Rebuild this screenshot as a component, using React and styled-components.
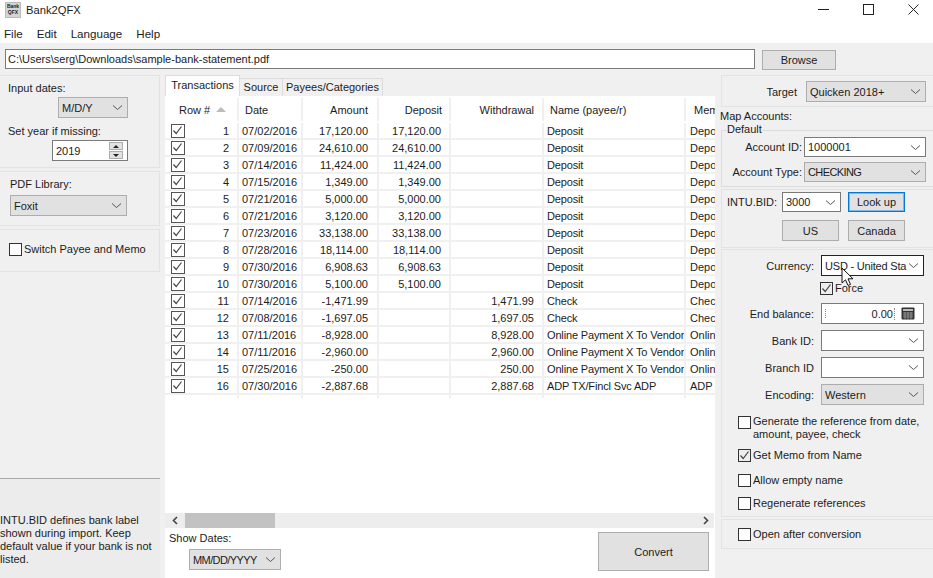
import React from 'react';
import styled, { createGlobalStyle } from 'styled-components';

const GlobalStyle = createGlobalStyle`
  html, body { margin: 0; padding: 0; background: #f0f0f0; }
  body { font-family: "Liberation Sans", Arial, sans-serif; font-size: 11px; color: #1c1c1c; }
`;

const Window = styled.div`
  width: 933px;
  height: 578px;
  overflow: hidden;
  position: relative;
  display: flex;
  flex-direction: column;
  background: #f0f0f0;
`;

const TitleBar = styled.div`
  height: 23px;
  background: #fff;
  display: flex;
  align-items: flex-start;
  padding: 2px 0 0 5px;
  box-sizing: border-box;
  font-size: 11.2px;
  line-height: 16px;
`;

const AppIcon = styled.div`
  width: 16px;
  height: 16px;
  margin-right: 5px;
  background: #d4d4d4;
  border: 1px solid #bbb;
  box-sizing: border-box;
  font: bold 5px/6px "Liberation Sans", sans-serif;
  text-align: center;
  overflow: hidden;
`;

const WindowButtons = styled.div`
  margin-left: auto;
  display: flex;
  gap: 34px;
  padding: 2px 14px 0 0;
  svg { display: block; }
`;

const MenuBar = styled.div`
  height: 20px;
  background: #fff;
  display: flex;
  gap: 14px;
  padding-left: 4px;
  align-items: center;
  font-size: 11.6px;
`;

const PathRow = styled.div`
  height: 32px;
  display: flex;
  align-items: flex-start;
  padding: 6px 0 0 5px;
  box-sizing: border-box;
`;

const PathInput = styled.div`
  width: 750px;
  height: 20px;
  line-height: 19px;
  background: #fff;
  border: 1px solid #7a7a7a;
  box-sizing: border-box;
  padding-left: 2px;
  white-space: nowrap;
`;

const Button = styled.div`
  width: ${p => p.$w}px;
  height: ${p => p.$h}px;
  margin-left: ${p => p.$ml || 0}px;
  margin-top: ${p => p.$mt || 0}px;
  background: #e1e1e1;
  border: 1px solid ${p => (p.$focus ? '#0078d7' : '#adadad')};
  box-shadow: ${p => (p.$focus ? 'inset 0 0 0 1px #7fb8e6' : 'none')};
  box-sizing: border-box;
  display: flex;
  align-items: center;
  justify-content: center;
  flex: none;
`;

const ConvertButton = styled(Button)`
  margin-left: auto;
`;

const Main = styled.div`
  flex: 1;
  display: flex;
  min-height: 0;
`;

const LeftColumn = styled.div`
  width: 160px;
  display: flex;
  flex-direction: column;
  gap: 3px;
`;

const Panel = styled.div`
  height: ${p => p.$h}px;
  margin-top: ${p => p.$mt || 0}px;
  border: 1px solid #e3e3e3;
  border-left: ${p => (p.$open ? 'none' : '1px solid #e3e3e3')};
  border-right: ${p => (p.$noRight ? 'none' : '1px solid #e3e3e3')};
  box-sizing: border-box;
  padding: ${p => p.$pad || '0'};
  flex: none;
`;

const Label = styled.div`
  height: 14px;
  line-height: 14px;
  white-space: nowrap;
  width: ${p => (p.$w ? `${p.$w}px` : 'auto')};
  margin-top: ${p => p.$mt || 0}px;
  flex: none;
`;

const FieldBox = styled.div`
  width: ${p => p.$w}px;
  height: ${p => p.$h || 21}px;
  margin-left: ${p => p.$ml || 0}px;
  margin-top: ${p => p.$mt || 0}px;
  background: ${p => (p.$white ? '#fff' : '#e1e1e1')};
  border: 1px solid ${p => p.$border || (p.$white ? '#7a7a7a' : '#adadad')};
  box-sizing: border-box;
  display: flex;
  align-items: center;
  padding: 0 4px 0 3px;
  flex: none;
  white-space: nowrap;
  overflow: hidden;
  letter-spacing: ${p => p.$tight || 0}px;
`;

const Chevron = styled.svg`
  margin-left: auto;
  flex: none;
`;

const SpinButtons = styled.div`
  margin-left: auto;
  display: flex;
  flex-direction: column;
  gap: 1px;
`;

const Spin = styled.div`
  width: 14px;
  height: 8px;
  background: #e1e1e1;
  border: 1px solid #adadad;
  box-sizing: border-box;
  display: flex;
  align-items: center;
  justify-content: center;
`;

const Tick = styled.svg`
  display: block;
  flex: none;
`;

const CheckRow = styled.div`
  display: flex;
  align-items: ${p => (p.$top ? 'flex-start' : 'center')};
  gap: 2px;
  margin-left: ${p => p.$ml || 0}px;
  margin-top: ${p => p.$mt || 0}px;
  height: ${p => p.$h || 14}px;
  line-height: 13px;
  white-space: nowrap;
`;

const BoxMark = styled.span`
  width: 13px;
  height: 13px;
  flex: none;
  margin-top: ${p => (p.$top ? 1 : 0)}px;
  border: 1px solid #333;
  background: ${p => (p.$on ? '#eee' : '#fff')};
  box-sizing: border-box;
  display: block;
`;

const Note = styled.div`
  margin-top: auto;
  height: 100px;
  flex: none;
  background: #ececec;
  border-top: 1px solid #a9a9a9;
  box-sizing: border-box;
  padding-top: 35px;
  line-height: 13px;
  white-space: nowrap;
`;

const Center = styled.div`
  width: 550px;
  margin-left: 5px;
  display: flex;
  flex-direction: column;
  background: #fff;
`;

const TabStrip = styled.div`
  height: 21px;
  background: #f0f0f0;
  display: flex;
  align-items: flex-end;
  flex: none;
`;

const Tab = styled.div`
  width: ${p => p.$w}px;
  height: ${p => (p.$active ? 21 : 18)}px;
  padding-bottom: ${p => (p.$active ? 3 : 1)}px;
  background: ${p => (p.$active ? '#fff' : '#f0f0f0')};
  border: 1px solid #dcdcdc;
  border-left-width: ${p => (p.$active ? 1 : 0)}px;
  border-bottom: none;
  box-sizing: border-box;
  display: flex;
  align-items: center;
  justify-content: center;
  white-space: nowrap;
`;

const TableArea = styled.div`
  flex: 1;
  overflow: hidden;
  min-height: 0;
`;

const Grid = styled.table`
  border-collapse: collapse;
  table-layout: fixed;
  width: 550px;
  margin-top: 2px;
`;

const HeadCell = styled.th`
  height: 24px;
  padding: 0 ${p => p.$pr || 0}px 0 ${p => p.$pl || 0}px;
  font-weight: 400;
  text-align: ${p => p.$align || 'left'};
  border-right: ${p => (p.$last ? 'none' : '2px solid #f0f0f0')};
  border-bottom: 2px solid #fff;
  box-sizing: border-box;
  white-space: nowrap;
  overflow: hidden;
`;

const Cell = styled.td`
  height: 17px;
  padding: 0 ${p => p.$pr || 0}px 0 ${p => p.$pl || 0}px;
  text-align: ${p => p.$align || 'left'};
  border-right: ${p => (p.$noline ? 'none' : '2px solid #f0f0f0')};
  border-bottom: 2px solid #f0f0f0;
  box-sizing: border-box;
  line-height: 14px;
  white-space: nowrap;
  overflow: hidden;
  letter-spacing: ${p => p.$tight || 0}px;
`;

const SortArrow = styled.span`
  display: inline-block;
  margin-left: 6px;
  vertical-align: 2px;
  border-left: 5px solid transparent;
  border-right: 5px solid transparent;
  border-bottom: 5px solid #bcbcbc;
`;

const StubRow = styled.tr`
  td { height: 3px; padding: 0; border-right: 2px solid #f0f0f0; }
  td:first-child, td:last-child { border-right: none; }
`;

const HScroll = styled.div`
  height: 15px;
  background: #ededed;
  display: flex;
  align-items: center;
  flex: none;
  margin-right: 1px;
`;

const ScrollThumb = styled.div`
  width: 90px;
  height: 15px;
  margin-left: 7px;
  background: #c2c2c2;
`;

const ScrollArrow = styled.svg`
  margin: ${p => (p.$right ? '0 5px 0 auto' : '0 0 0 7px')};
  flex: none;
`;

const FooterRow = styled.div`
  height: 50px;
  flex: none;
  display: flex;
  padding: 3px 6px 0 4px;
  box-sizing: border-box;
`;

const ShowDates = styled.div`
  display: flex;
  flex-direction: column;
`;

const RightColumn = styled.div`
  width: 212px;
  margin-left: 6px;
  display: flex;
  flex-direction: column;
`;

const FormRow = styled.div`
  display: grid;
  grid-template-columns: ${p => p.$label}px ${p => p.$field}px;
  column-gap: ${p => p.$gap}px;
  align-items: center;
  margin-top: ${p => p.$mt || 0}px;
  height: ${p => p.$h || 21}px;
`;

const RightLabel = styled.div`
  text-align: right;
  white-space: nowrap;
`;

const MapLabel = styled.div`
  height: 18px;
  line-height: 16px;
  padding-top: 1px;
  box-sizing: border-box;
  margin-left: -1px;
`;

const GroupBox = styled.fieldset`
  margin: -1px 0 0;
  padding: 1px 0 0;
  height: 63px;
  box-sizing: border-box;
  border: 1px solid #dcdcdc;
  border-right: none;
  flex: none;
  legend {
    margin-left: 5px;
    padding: 0;
    height: 12px;
    line-height: 10px;
  }
`;

const ButtonRow = styled.div`
  display: flex;
  align-items: center;
  margin-top: ${p => p.$mt || 0}px;
  margin-left: ${p => p.$ml || 0}px;
`;

const Caret = styled.span`
  width: 1px;
  height: 9px;
  border-left: 1px dotted #888;
`;

const Amount = styled.span`
  margin-left: auto;
  padding-right: 1px;
  border-right: 1px dotted #888;
`;

const Calculator = styled.svg`
  margin: 0 4px 0 6px;
  flex: none;
`;

const Cursor = styled.svg`
  position: absolute;
  left: 841px;
  top: 267px;
`;

const RowCheck = styled(BoxMark)`
  width: 14px;
  height: 14px;
  margin-left: 6px;
  border: 1px solid #555;
  background: #fff;
`;

const Chev = () => (
  <Chevron width="11" height="7" viewBox="0 0 11 7" fill="none">
    <path d="M1 1.5 L5.5 5.5 L10 1.5" stroke="#555" strokeWidth="1" />
  </Chevron>
);

const CheckGlyph = () => (
  <Tick width="11" height="11" viewBox="0 0 11 11" fill="none">
    <path d="M1.5 5.5 L4.2 8.5 L9.5 1.5" stroke="#444" strokeWidth="1.2" />
  </Tick>
);

const Check = ({ on, top }) => (
  <BoxMark $on={on} $top={top}>
    {on && <CheckGlyph />}
  </BoxMark>
);

const rows = [
  ['07/02/2016', '17,120.00', '17,120.00', '', 'Deposit', 'Deposit'],
  ['07/09/2016', '24,610.00', '24,610.00', '', 'Deposit', 'Deposit'],
  ['07/14/2016', '11,424.00', '11,424.00', '', 'Deposit', 'Deposit'],
  ['07/15/2016', '1,349.00', '1,349.00', '', 'Deposit', 'Deposit'],
  ['07/21/2016', '5,000.00', '5,000.00', '', 'Deposit', 'Deposit'],
  ['07/21/2016', '3,120.00', '3,120.00', '', 'Deposit', 'Deposit'],
  ['07/23/2016', '33,138.00', '33,138.00', '', 'Deposit', 'Deposit'],
  ['07/28/2016', '18,114.00', '18,114.00', '', 'Deposit', 'Deposit'],
  ['07/30/2016', '6,908.63', '6,908.63', '', 'Deposit', 'Deposit'],
  ['07/30/2016', '5,100.00', '5,100.00', '', 'Deposit', 'Deposit'],
  ['07/14/2016', '-1,471.99', '', '1,471.99', 'Check', 'Check'],
  ['07/08/2016', '-1,697.05', '', '1,697.05', 'Check', 'Check'],
  ['07/11/2016', '-8,928.00', '', '8,928.00', 'Online Payment X To Vendor', 'Online'],
  ['07/11/2016', '-2,960.00', '', '2,960.00', 'Online Payment X To Vendor', 'Online'],
  ['07/25/2016', '-250.00', '', '250.00', 'Online Payment X To Vendor', 'Online'],
  ['07/30/2016', '-2,887.68', '', '2,887.68', 'ADP TX/Fincl Svc ADP', 'ADP Tx'],
];

export default function App() {
  return (
    <Window>
      <GlobalStyle />
      <TitleBar>
        <AppIcon>Bank<br />QFX</AppIcon>
        Bank2QFX
        <WindowButtons>
          <svg width="11" height="11" viewBox="0 0 11 11"><path d="M0 5.5H11" stroke="#222" /></svg>
          <svg width="11" height="11" viewBox="0 0 11 11" fill="none"><rect x="0.5" y="0.5" width="10" height="10" stroke="#222" /></svg>
          <svg width="11" height="11" viewBox="0 0 11 11"><path d="M0.5 0.5L10.5 10.5M10.5 0.5L0.5 10.5" stroke="#222" /></svg>
        </WindowButtons>
      </TitleBar>
      <MenuBar>
        <span>File</span><span>Edit</span><span>Language</span><span>Help</span>
      </MenuBar>
      <PathRow>
        <PathInput>C:\Users\serg\Downloads\sample-bank-statement.pdf</PathInput>
        <Button $w={74} $h={20} $ml={7} $mt={1}>Browse</Button>
      </PathRow>
      <Main>
        <LeftColumn>
          <Panel $h={93} $open $pad="5px 0 0 8px">
            <Label>Input dates:</Label>
            <FieldBox $w={70} $ml={50} $mt={2}>M/D/Y<Chev /></FieldBox>
            <Label $mt={6}>Set year if missing:</Label>
            <FieldBox $w={76} $ml={44} $mt={2} $white>
              2019
              <SpinButtons>
                <Spin><svg width="6" height="3"><path d="M3 0L6 3H0Z" fill="#222" /></svg></Spin>
                <Spin><svg width="6" height="3"><path d="M0 0H6L3 3Z" fill="#222" /></svg></Spin>
              </SpinButtons>
            </FieldBox>
          </Panel>
          <Panel $h={55} $open $pad="5px 0 0 10px">
            <Label>PDF Library:</Label>
            <FieldBox $w={117} $mt={4}>Foxit<Chev /></FieldBox>
          </Panel>
          <Panel $h={43} $open $pad="12px 0 0 9px">
            <CheckRow><Check />Switch Payee and Memo</CheckRow>
          </Panel>
          <Note>INTU.BID defines bank label<br />shown during import. Keep<br />default value if your bank is not<br />listed.</Note>
        </LeftColumn>

        <Center>
          <TabStrip>
            <Tab $active $w={75}>Transactions</Tab>
            <Tab $w={43}>Source</Tab>
            <Tab $w={100}>Payees/Categories</Tab>
          </TabStrip>
          <TableArea>
            <Grid>
              <colgroup>
                <col width="27" /><col width="46" /><col width="64" /><col width="76" />
                <col width="72" /><col width="93" /><col width="142" /><col width="30" />
              </colgroup>
              <thead>
                <tr>
                  <HeadCell colSpan={2} $pl={14}>Row #<SortArrow /></HeadCell>
                  <HeadCell $pl={6}>Date</HeadCell>
                  <HeadCell $align="right" $pr={9}>Amount</HeadCell>
                  <HeadCell $align="right" $pr={7}>Deposit</HeadCell>
                  <HeadCell $align="right" $pr={8}>Withdrawal</HeadCell>
                  <HeadCell $pl={6}>Name (payee/r)</HeadCell>
                  <HeadCell $pl={8} $last>Memo</HeadCell>
                </tr>
              </thead>
              <tbody>
                {rows.map((r, i) => (
                  <tr key={i}>
                    <Cell $noline><RowCheck $on><CheckGlyph /></RowCheck></Cell>
                    <Cell $align="right" $pr={8}>{i + 1}</Cell>
                    <Cell $pl={3}>{r[0]}</Cell>
                    <Cell $align="right" $pr={9}>{r[1]}</Cell>
                    <Cell $align="right" $pr={8}>{r[2]}</Cell>
                    <Cell $align="right" $pr={8}>{r[3]}</Cell>
                    <Cell $pl={3} $tight={-0.15}>{r[4]}</Cell>
                    <Cell $pl={4} $noline>{r[5]}</Cell>
                  </tr>
                ))}
                <StubRow><td /><td /><td /><td /><td /><td /><td /><td /></StubRow>
              </tbody>
            </Grid>
          </TableArea>
          <HScroll>
            <ScrollArrow width="6" height="9" viewBox="0 0 6 9" fill="none">
              <path d="M5 1L1.5 4.5L5 8" stroke="#444" strokeWidth="1.6" />
            </ScrollArrow>
            <ScrollThumb />
            <ScrollArrow $right width="6" height="9" viewBox="0 0 6 9" fill="none">
              <path d="M1 1L4.5 4.5L1 8" stroke="#444" strokeWidth="1.6" />
            </ScrollArrow>
          </HScroll>
          <FooterRow>
            <ShowDates>
              <Label>Show Dates:</Label>
              <FieldBox $w={92} $ml={20} $mt={4} $tight={-0.6}>MM/DD/YYYY<Chev /></FieldBox>
            </ShowDates>
            <ConvertButton $w={111} $h={39} $mt={1}>Convert</ConvertButton>
          </FooterRow>
        </Center>

        <RightColumn>
          <Panel $h={32} $noRight>
            <FormRow $label={75} $field={120} $gap={9} $mt={5}>
              <RightLabel>Target</RightLabel>
              <FieldBox $w={120}>Quicken 2018+<Chev /></FieldBox>
            </FormRow>
          </Panel>
          <MapLabel>Map Accounts:</MapLabel>
          <GroupBox>
            <legend>Default</legend>
            <FormRow $label={80} $field={122} $gap={2} $h={20}>
              <RightLabel>Account ID:</RightLabel>
              <FieldBox $w={122} $h={20} $white>1000001<Chev /></FieldBox>
            </FormRow>
            <FormRow $label={80} $field={122} $gap={2} $h={20} $mt={5}>
              <RightLabel>Account Type:</RightLabel>
              <FieldBox $w={122} $h={20} $tight={-0.6}>CHECKING<Chev /></FieldBox>
            </FormRow>
          </GroupBox>
          <Panel $h={59} $noRight $mt={2} $pad="2px 0 0 5px">
            <ButtonRow>
              <Label $w={55}>INTU.BID:</Label>
              <FieldBox $w={59} $h={20} $white>3000<Chev /></FieldBox>
              <Button $w={57} $h={20} $ml={7} $focus>Look up</Button>
            </ButtonRow>
            <ButtonRow $ml={55} $mt={8}>
              <Button $w={57} $h={21}>US</Button>
              <Button $w={57} $h={21} $ml={9}>Canada</Button>
            </ButtonRow>
          </Panel>
          <Panel $h={268} $noRight $mt={1} $pad="5px 0 0 0">
            <FormRow $label={92} $field={103} $gap={7} $h={21}>
              <RightLabel>Currency:</RightLabel>
              <FieldBox $w={103} $white $border="#222" $tight={-0.2}>USD - United Sta<Chev /></FieldBox>
            </FormRow>
            <CheckRow $ml={98} $mt={5}><Check on />Force</CheckRow>
            <FormRow $label={92} $field={103} $gap={7} $h={21} $mt={8}>
              <RightLabel>End balance:</RightLabel>
              <FieldBox $w={103} $white>
                <Caret />
                <Amount>0.00</Amount>
                <Calculator width="14" height="13" viewBox="0 0 14 13">
                  <rect x="0.5" y="0.5" width="13" height="12" rx="1" fill="#333" />
                  <rect x="2" y="2" width="10" height="2" fill="#bbb" />
                  <path d="M2 6H12M2 8H12M2 10H12M4 5V12M7 5V12M10 5V12" stroke="#aaa" strokeWidth="0.7" />
                </Calculator>
              </FieldBox>
            </FormRow>
            <FormRow $label={92} $field={103} $gap={7} $h={21} $mt={6}>
              <RightLabel>Bank ID:</RightLabel>
              <FieldBox $w={103} $white><Chev /></FieldBox>
            </FormRow>
            <FormRow $label={92} $field={103} $gap={7} $h={21} $mt={6}>
              <RightLabel>Branch ID</RightLabel>
              <FieldBox $w={103} $white><Chev /></FieldBox>
            </FormRow>
            <FormRow $label={92} $field={103} $gap={7} $h={21} $mt={6}>
              <RightLabel>Encoding:</RightLabel>
              <FieldBox $w={103}>Western<Chev /></FieldBox>
            </FormRow>
            <CheckRow $ml={16} $mt={10} $h={26} $top>
              <Check top /><span>Generate the reference from date,<br />amount, payee, check</span>
            </CheckRow>
            <CheckRow $ml={16} $mt={7}><Check on />Get Memo from Name</CheckRow>
            <CheckRow $ml={16} $mt={11}><Check />Allow empty name</CheckRow>
            <CheckRow $ml={16} $mt={9}><Check />Regenerate references</CheckRow>
          </Panel>
          <Panel $h={30} $noRight $mt={2} $pad="7px 0 0 16px">
            <CheckRow><Check />Open after conversion</CheckRow>
          </Panel>
        </RightColumn>
      </Main>
      <Cursor width="14" height="20" viewBox="0 0 14 20">
        <path d="M1 1V16L4.5 12.8L7 18.5L9.5 17.4L7 11.8H12Z" fill="#fff" stroke="#111" strokeWidth="1" />
      </Cursor>
    </Window>
  );
}
